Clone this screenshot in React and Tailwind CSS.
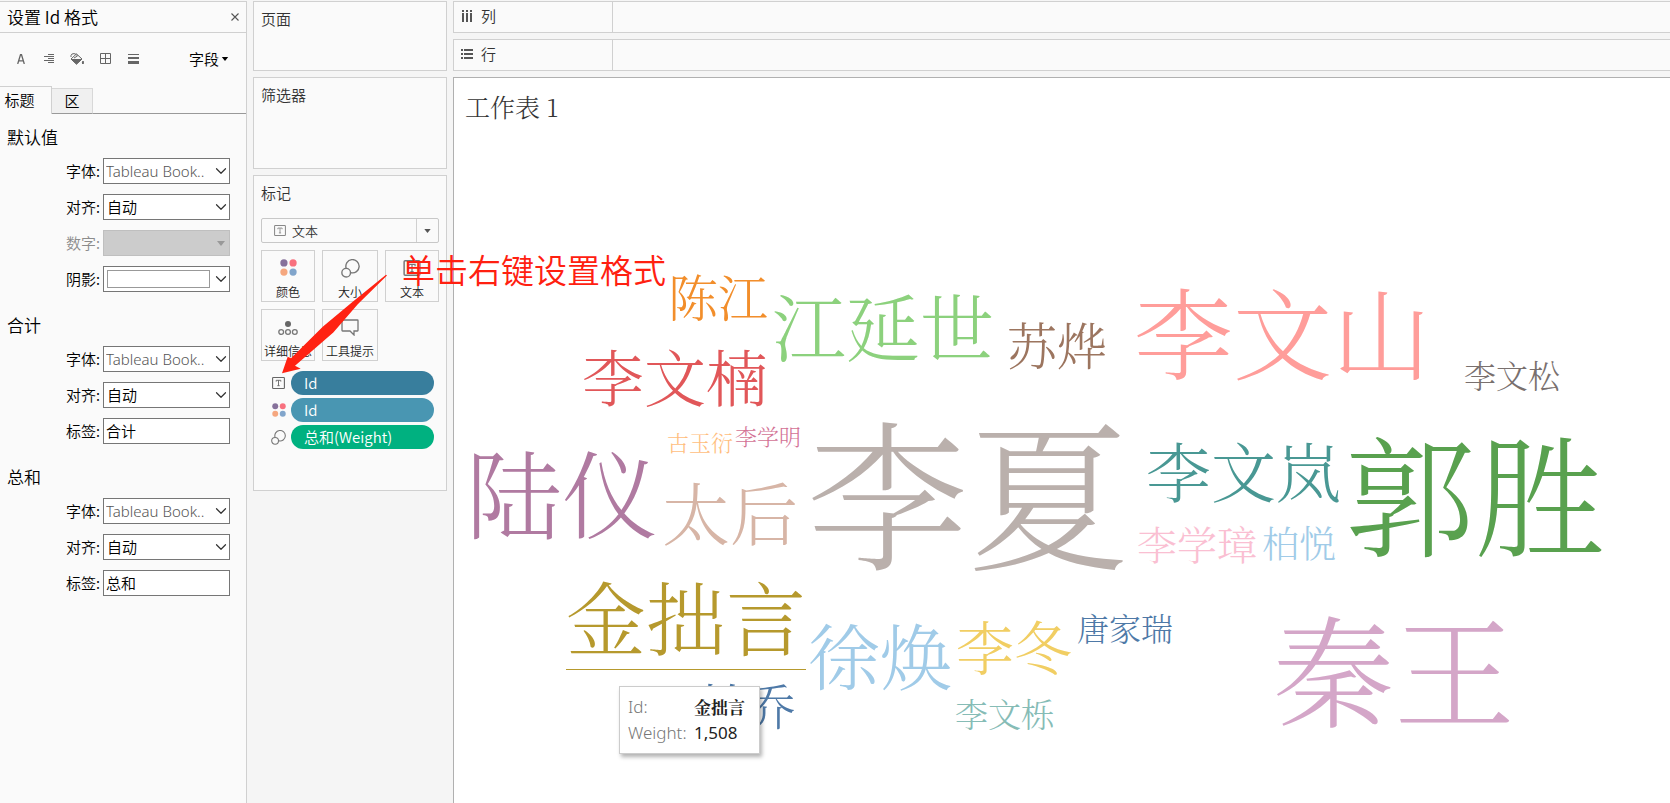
import { ChevronDown } from "lucide-react";

// x / y is the centre of the word inside the canvas
const words = [
  { text: "陈江", x: 264, y: 219, size: 50, color: "#f28e2b" },
  { text: "江延世", x: 429, y: 250, size: 74, color: "#8cd17d" },
  { text: "苏烨", x: 603, y: 267, size: 50, color: "#9c755f" },
  { text: "李文山", x: 828, y: 256, size: 99, color: "#ff9d9a" },
  { text: "李文楠", x: 221, y: 301, size: 62, color: "#e15759" },
  { text: "李文松", x: 1058, y: 298, size: 32, color: "#79706e" },
  { text: "古玉衍", x: 246, y: 365, size: 22, color: "#ffbe7d" },
  { text: "李学明", x: 314, y: 359, size: 22, color: "#d37295" },
  { text: "陆仪", x: 108, y: 417, size: 96, color: "#b07aa1" },
  { text: "太后", x: 276, y: 436, size: 68, color: "#d7b5a6" },
  { text: "李夏", x: 514, y: 419, size: 161, color: "#bab0ac" },
  { text: "李文岚", x: 789, y: 395, size: 65, color: "#499894" },
  { text: "郭胜", x: 1021, y: 418, size: 130, color: "#59a14f" },
  { text: "李学璋", x: 743, y: 467, size: 40, color: "#fabfd2" },
  { text: "柏悦", x: 845, y: 466, size: 37, color: "#a0cbe8" },
  { text: "徐焕", x: 426, y: 579, size: 72, color: "#a0cbe8" },
  { text: "李冬", x: 560, y: 570, size: 58, color: "#f1ce63" },
  { text: "唐家瑞", x: 671, y: 551, size: 32, color: "#4e79a7" },
  { text: "柏乔", x: 293, y: 629, size: 49, color: "#4e79a7" },
  { text: "李文栎", x: 550, y: 636, size: 33, color: "#86bcb6" },
  { text: "秦王", x: 940, y: 595, size: 121, color: "#d4a6c8" },
  { text: "金拙言", x: 232, y: 541, size: 80, color: "#b6992d", selected: true },
];

const Caret = ({ className }) => (
  <svg viewBox="0 0 8 5" className={className} fill="currentColor">
    <path d="M0 0h8L4 5z" />
  </svg>
);

const DotsIcon = ({ className }) => (
  <svg viewBox="0 0 16 16" className={className}>
    <circle cx="3.7" cy="3.7" r="3.4" fill="#86719b" />
    <circle cx="12.3" cy="3.7" r="3.4" fill="#f8717f" />
    <circle cx="3.7" cy="12.3" r="3.4" fill="#f5a77f" />
    <circle cx="12.3" cy="12.3" r="3.4" fill="#81a5cb" />
  </svg>
);

const SizeIcon = ({ className }) => (
  <svg viewBox="0 0 18 18" className={className} fill="none" stroke="#777" strokeWidth="1.3">
    <path d="M4.900 8.800A6.300 6.300 0 1 1 9.400 13" />
    <circle cx="4.900" cy="13" r="4.100" />
  </svg>
);

const TextIcon = ({ className }) => (
  <svg viewBox="0 0 14 13" className={className} fill="none" stroke="currentColor">
    <rect x=".6" y=".6" width="12.8" height="11.8" rx=".8" strokeWidth="1.2" />
    <path d="M4.500 5V3.600h5V5M7 3.600v5.800M5.700 9.400h2.600" />
  </svg>
);

const DetailIcon = ({ className }) => (
  <svg viewBox="0 0 20 16" className={className} fill="none" stroke="#777" strokeWidth="1.3">
    <circle cx="10" cy="4" r="3" fill="#666" stroke="none" />
    <circle cx="3.2" cy="12" r="2.4" />
    <circle cx="10" cy="12" r="2.4" />
    <circle cx="16.8" cy="12" r="2.4" />
  </svg>
);

const TooltipIcon = ({ className }) => (
  <svg viewBox="0 0 18 17" className={className} fill="none" stroke="#777" strokeWidth="1.3">
    <path d="M1.500 1h15q.5 0 .5.5v10q0 .5-.5.5H13v4l-4-4H1.500q-.5 0-.5-.5v-10Q1 1 1.500 1z" />
  </svg>
);

function ToolIcons() {
  const btn = "flex size-5 items-center justify-center text-[#666]";
  return (
    <div className="flex gap-2">
      <button aria-label="字体" className={btn}>
        <svg viewBox="0 0 8 10" className="h-[10px] w-2" fill="none" stroke="currentColor" strokeWidth="1.3">
          <path d="M.7 10 3.500.7h1L7.300 10M1.800 6.800h4.400" />
        </svg>
      </button>
      <button aria-label="对齐" className={btn}>
        <svg viewBox="0 0 10 10" className="size-[10px]" stroke="currentColor">
          <path d="M4 .5h6M0 2.500h10M4 4.500h6M0 6.500h10M4 8.500h6" />
        </svg>
      </button>
      <button aria-label="阴影" className={btn}>
        <svg viewBox="0 0 14 12" className="h-3 w-[14px]" fill="none" stroke="currentColor">
          <path d="M1 6 6.500.9 12 6l-5.500 5z" />
          <path d="M1.500 6.500h10L6.500 11z" fill="currentColor" />
          <path d="M1 4V2.500Q1.300.6 4 .6q2 0 3.500 2.400L4 5" />
          <path d="M13 8q1.200 2 0 3-1.600-.5 0-3z" fill="currentColor" />
        </svg>
      </button>
      <button aria-label="边界" className={btn}>
        <svg viewBox="0 0 11 11" className="size-[11px]" fill="none" stroke="currentColor">
          <path d="M.5.5h10v10H.5zM5.500.5v10M.5 5.500h10" />
        </svg>
      </button>
      <button aria-label="线" className={btn}>
        <svg viewBox="0 0 11 10" className="h-[10px] w-[11px]" fill="currentColor">
          <path d="M0 0h11v1H0zM0 3h11v2H0zM0 7h11v3H0z" />
        </svg>
      </button>
    </div>
  );
}

function Field({ id, label, type, value }) {
  const disabled = type === "disabled";
  return (
    <div className="flex h-[26px] items-center justify-end gap-[3px] pr-4">
      <label htmlFor={id} className={disabled ? "text-[#8c8c8c]" : "text-black"}>
        {label}:
      </label>
      {type === "input" ? (
        <input
          id={id}
          defaultValue={value}
          className="h-[26px] w-[127px] border border-[#767676] bg-white px-[2px] pb-[2px] text-black"
        />
      ) : (
        <div className="relative h-[26px] w-[127px]">
          <select
            id={id}
            disabled={disabled}
            className={
              disabled
                ? "size-full appearance-none border border-[#bfbfbf] bg-[#ccc]"
                : type === "font"
                  ? "size-full appearance-none border border-[#767676] bg-white px-[2px] font-['Noto_Sans'] text-[15px] font-light text-[#555]"
                  : "size-full appearance-none border border-[#767676] bg-white px-[3px] text-black"
            }
          >
            <option>{value}</option>
          </select>
          {type === "color" && (
            <span className="pointer-events-none absolute top-1 left-1 h-[18px] w-[103px] border border-[#999] bg-white" />
          )}
          {disabled ? (
            <Caret className="pointer-events-none absolute top-[11px] right-[5px] h-[5px] w-2 text-[#999]" />
          ) : (
            <ChevronDown
              size={18}
              strokeWidth={1.6}
              className="pointer-events-none absolute top-1 right-0 text-[#333]"
            />
          )}
        </div>
      )}
    </div>
  );
}

function Section({ title, children }) {
  return (
    <section className="mb-5">
      <h3 className="mb-2 h-[26px] pl-[7px] text-[17px] leading-[26px] text-black">{title}</h3>
      <div className="flex flex-col gap-[10px]">{children}</div>
    </section>
  );
}

function FormatPane() {
  return (
    <aside className="mt-px w-[247px] shrink-0 border-t border-r border-[#d0d0d0] bg-[#fafafa]">
      <header className="flex h-[31px] items-center justify-between border-b border-[#d0d0d0] pr-[7px] pl-[7px]">
        <h2 className="text-[17px] text-black">设置 Id 格式</h2>
        <button aria-label="关闭" className="flex h-4 w-2 items-center justify-center">
          <svg viewBox="0 0 8 8" className="size-2" stroke="#555" strokeWidth="1.1">
            <path d="M.5.5l7 7M7.500.5l-7 7" />
          </svg>
        </button>
      </header>
      <div className="flex h-[53px] items-center justify-between pr-[17px] pb-[2px] pl-[11px]">
        <ToolIcons />
        <button className="flex items-center gap-[2px] text-black">
          字段
          <Caret className="h-[4px] w-2" />
        </button>
      </div>
      <div className="flex h-7 items-end" role="tablist">
        <button
          role="tab"
          aria-selected="true"
          className="h-7 w-[52px] border-t border-r border-[#d0d0d0] pr-3 pb-[2px] text-black"
        >
          标题
        </button>
        <button
          role="tab"
          aria-selected="false"
          className="h-[26px] w-[41px] border-t border-r border-b border-t-[#d8d8d8] border-r-[#d8d8d8] border-b-[#999] bg-[#f0f0f0] text-black"
        >
          区
        </button>
        <span className="h-px grow bg-[#999]" />
      </div>
      <div className="pt-[10px]">
        <Section title="默认值">
          <Field id="d-font" label="字体" type="font" value="Tableau Book.." />
          <Field id="d-align" label="对齐" type="select" value="自动" />
          <Field id="d-number" label="数字" type="disabled" value="" />
          <Field id="d-shade" label="阴影" type="color" value="" />
        </Section>
        <Section title="合计">
          <Field id="t-font" label="字体" type="font" value="Tableau Book.." />
          <Field id="t-align" label="对齐" type="select" value="自动" />
          <Field id="t-label" label="标签" type="input" value="合计" />
        </Section>
        <Section title="总和">
          <Field id="s-font" label="字体" type="font" value="Tableau Book.." />
          <Field id="s-align" label="对齐" type="select" value="自动" />
          <Field id="s-label" label="标签" type="input" value="总和" />
        </Section>
      </div>
    </aside>
  );
}

function MarkButton({ icon, label }) {
  return (
    <button className="flex h-[52px] flex-col items-center justify-between border border-[#d0d0d0] pt-2 text-[12px] leading-[18px] whitespace-nowrap text-[#222]">
      {icon}
      {label}
    </button>
  );
}

function Pill({ icon, label, className }) {
  return (
    <div className="flex items-center gap-1">
      <span className="flex w-[17px] shrink-0 justify-center text-[#666]">{icon}</span>
      <button className={`h-6 grow rounded-full pl-[13px] text-left text-[15px] leading-6 text-white ${className}`}>
        {label}
      </button>
    </div>
  );
}

function Cards() {
  const card = "border border-[#d0d0d0] bg-[#fafafa] px-[7px] pt-[6px]";
  return (
    <div className="mt-px flex w-[194px] shrink-0 flex-col gap-[6px] text-[#333]">
      <section className={`h-[70px] ${card}`}>
        <h3>页面</h3>
      </section>
      <section className={`h-[92px] ${card}`}>
        <h3>筛选器</h3>
      </section>
      <section className={`h-[316px] ${card}`}>
        <h3>标记</h3>
        <button className="mt-[14px] flex h-[25px] w-full items-center rounded-xs border border-[#c8c8c8] pl-3 text-[13px]">
          <TextIcon className="h-[11px] w-3 text-[#888]" />
          <span className="ml-[6px] grow text-left">文本</span>
          <span className="flex h-full w-[22px] items-center justify-center border-l border-[#d0d0d0]">
            <Caret className="h-1 w-[7px] text-[#555]" />
          </span>
        </button>
        <div className="mt-[7px] grid grid-cols-[54px_56px_54px] gap-[7px]">
          <MarkButton icon={<DotsIcon className="size-[17px]" />} label="颜色" />
          <MarkButton icon={<SizeIcon className="size-[19px]" />} label="大小" />
          <MarkButton icon={<TextIcon className="mt-px h-4 w-[18px] text-[#777]" />} label="文本" />
          <MarkButton icon={<DetailIcon className="mt-[2px] h-4 w-5" />} label="详细信息" />
          <MarkButton icon={<TooltipIcon className="mt-px h-[17px] w-[18px]" />} label="工具提示" />
        </div>
        <div className="mt-[10px] flex flex-col gap-[3px] pr-[5px] pl-[9px]">
          <Pill icon={<TextIcon className="h-3 w-[13px]" />} label="Id" className="bg-[#387e9d]" />
          <Pill icon={<DotsIcon className="size-[14px]" />} label="Id" className="bg-[#4996b2]" />
          <Pill icon={<SizeIcon className="size-[15px]" />} label="总和(Weight)" className="bg-[#00b180]" />
        </div>
      </section>
    </div>
  );
}

function Shelf({ icon, label }) {
  return (
    <div className="flex h-8 border border-r-0 border-[#d0d0d0] bg-[#fafafa] text-[#333]">
      <div className="flex w-[159px] items-center gap-2 border-r border-[#d0d0d0] pb-[2px] pl-[7px]">
        {icon}
        {label}
      </div>
    </div>
  );
}

function Word({ text, x, y, size, color, selected }) {
  const left = Math.round(x - (size * text.length) / 2);
  const top = Math.round(y - size * 0.55);
  return (
    <span
      className="absolute leading-none font-light whitespace-nowrap font-['Noto_Serif_CJK_SC','Noto_Sans_CJK_SC',serif]"
      style={{ left, top, fontSize: size, color }}
    >
      {text}
      {selected && <span className="absolute top-full left-0 mt-[14px] h-px w-full bg-current" />}
    </span>
  );
}

function Sheet() {
  return (
    <main className="relative grow overflow-hidden border-t border-l border-[#b0b0b0] bg-white">
      <h1 className="pt-[10px] pl-[11px] font-['Noto_Serif_CJK_SC','Noto_Sans_CJK_SC',serif] text-[25px] leading-9 font-light text-[#333]">
        工作表 1
      </h1>
      {words.map((w) => (
        <Word key={w.text} {...w} />
      ))}
      <div className="absolute top-[608px] left-[165px] grid h-[68px] w-[141px] grid-cols-[65px_1fr] content-center border border-[#ccc] bg-white pl-2 font-['Noto_Sans','Noto_Sans_CJK_SC',sans-serif] text-[17px] leading-[26px] shadow-[2px_3px_4px_rgba(0,0,0,0.3)]">
        <span className="font-light text-[#777]">Id:</span>
        <span className="pl-px font-['Noto_Serif_CJK_SC','Noto_Sans_CJK_SC',serif] font-bold text-[#222]">
          金拙言
        </span>
        <span className="font-light text-[#777]">Weight:</span>
        <span className="pl-px font-normal text-[#222]">1,508</span>
      </div>
    </main>
  );
}

export default function App() {
  return (
    <div className="relative flex min-h-screen overflow-hidden bg-[#f5f5f5] font-['Noto_Sans_CJK_SC',sans-serif] text-[15px] leading-[22px] font-[350]">
      <FormatPane />
      <div className="flex min-w-0 grow gap-[6px] pl-[6px]">
        <Cards />
        <div className="flex min-w-0 grow flex-col gap-[6px] pt-px">
          <Shelf
            label="列"
            icon={
              <svg viewBox="0 0 12 12" className="size-3" fill="#555">
                <path d="M1 0h2v2H1zM5 0h2v2H5zM9 0h2v2H9zM1 3h2v9H1zM5 3h2v9H5zM9 3h2v9H9z" />
              </svg>
            }
          />
          <Shelf
            label="行"
            icon={
              <svg viewBox="0 0 12 12" className="size-3" fill="#555">
                <path d="M0 1h2v2H0zM0 5h2v2H0zM0 9h2v2H0zM3 1h9v2H3zM3 5h9v2H3zM3 9h9v2H3z" />
              </svg>
            }
          />
          <Sheet />
        </div>
      </div>
      <p className="pointer-events-none absolute top-[249px] left-[402px] text-[33px] leading-[40px] whitespace-nowrap text-[#ff2010]">
        单击右键设置格式
      </p>
      <svg
        viewBox="0 0 106 100"
        className="pointer-events-none absolute top-[274px] left-[281px] h-[100px] w-[106px]"
        fill="#ff2212"
      >
        <path d="M105 .7 72 27.500 42 52.500 10 84.300 6.700 82.700 1 99.300 19.700 94.700 14 91.700 52.300 58.500 77 30 106 1.500z" />
      </svg>
    </div>
  );
}
